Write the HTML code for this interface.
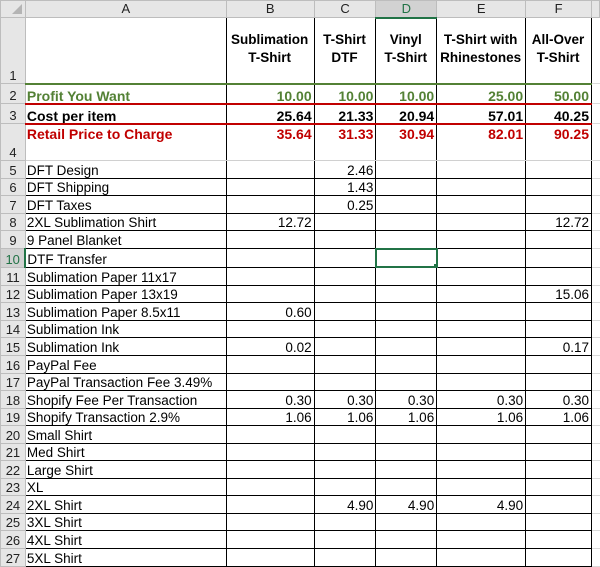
<!DOCTYPE html>
<html><head><meta charset="utf-8"><style>
html,body{margin:0;padding:0;background:#fff;width:600px;height:565px;overflow:hidden}
table{border-collapse:collapse;table-layout:fixed;position:absolute;left:0;top:0}
td{border:1px solid #000;padding:0 2px 0 1px;font:13.5px "Liberation Sans",Arial,sans-serif;white-space:nowrap;overflow:hidden;color:#000;line-height:14px;vertical-align:bottom}
td.h{background:#e6e6e6;border-color:#bdbdbd;text-align:center;color:#222;padding:0;font-size:13px}
tr.ch td{background:#e6e6e6;border-color:#bdbdbd;text-align:center;color:#222;vertical-align:middle;padding:0;font-size:13px}
td.n{text-align:right}
td.x{border-top-color:#d9d9d9;border-bottom-color:#d9d9d9;border-right:none}
tr.r td{height:16.55px}
.hd td.c{font-weight:bold;text-align:center;padding-bottom:16px;line-height:18px;font-size:13.5px}
.g td:not(.h):not(.x){color:#538135;font-weight:bold;border-top:2px solid #538135;font-size:14px}
.rd td:not(.h):not(.x){font-weight:bold;border-top:2px solid #c00000;font-size:14px}
.rr td:not(.h):not(.x){color:#c00000;font-weight:bold;border-top:2px solid #c00000;vertical-align:top;border-bottom-color:#d0d0d0;font-size:14px;padding-top:2px}
</style></head><body>
<table>
<colgroup><col style="width:25px"><col style="width:201px"><col style="width:88px"><col style="width:62px"><col style="width:61px"><col style="width:89px"><col style="width:66px"><col style="width:8px"></colgroup>
<tr class="ch" style="height:17px"><td></td><td>A</td><td>B</td><td>C</td><td style="background:#d2d2d2;color:#217346;border-bottom:2px solid #217346">D</td><td>E</td><td>F</td><td></td></tr>
<tr class="hd" style="height:66px"><td class="h" style="vertical-align:bottom">1</td><td></td><td class="c">Sublimation<br>T-Shirt</td><td class="c">T-Shirt<br>DTF</td><td class="c">Vinyl<br>T-Shirt</td><td class="c">T-Shirt with<br>Rhinestones</td><td class="c">All-Over<br>T-Shirt</td><td class="x"></td></tr>
<tr class="g" style="height:20px"><td class="h">2</td><td>Profit You Want</td><td class="n">10.00</td><td class="n">10.00</td><td class="n">10.00</td><td class="n">25.00</td><td class="n">50.00</td><td class="x"></td></tr>
<tr class="rd" style="height:20px"><td class="h">3</td><td>Cost per item</td><td class="n">25.64</td><td class="n">21.33</td><td class="n">20.94</td><td class="n">57.01</td><td class="n">40.25</td><td class="x"></td></tr>
<tr class="rr" style="height:37px"><td class="h">4</td><td>Retail Price to Charge</td><td class="n">35.64</td><td class="n">31.33</td><td class="n">30.94</td><td class="n">82.01</td><td class="n">90.25</td><td class="x"></td></tr>
<tr class="r"><td class="h">5</td><td>DFT Design</td><td></td><td class="n">2.46</td><td></td><td></td><td></td><td class="x"></td></tr>
<tr class="r"><td class="h">6</td><td>DFT Shipping</td><td></td><td class="n">1.43</td><td></td><td></td><td></td><td class="x"></td></tr>
<tr class="r"><td class="h">7</td><td>DFT Taxes</td><td></td><td class="n">0.25</td><td></td><td></td><td></td><td class="x"></td></tr>
<tr class="r"><td class="h">8</td><td>2XL Sublimation Shirt</td><td class="n">12.72</td><td></td><td></td><td></td><td class="n">12.72</td><td class="x"></td></tr>
<tr class="r"><td class="h">9</td><td>9 Panel Blanket</td><td></td><td></td><td></td><td></td><td></td><td class="x"></td></tr>
<tr class="r"><td class="h" style="color:#217346;background:#d2d2d2;border-right:2px solid #217346">10</td><td>DTF Transfer</td><td></td><td></td><td style="border:2px solid #217346;position:relative"><span style="position:absolute;right:-4px;bottom:-4px;width:5px;height:5px;background:#217346;border:1px solid #fff"></span></td><td></td><td></td><td class="x"></td></tr>
<tr class="r"><td class="h">11</td><td>Sublimation Paper 11x17</td><td></td><td></td><td></td><td></td><td></td><td class="x"></td></tr>
<tr class="r"><td class="h">12</td><td>Sublimation Paper 13x19</td><td></td><td></td><td></td><td></td><td class="n">15.06</td><td class="x"></td></tr>
<tr class="r"><td class="h">13</td><td>Sublimation Paper 8.5x11</td><td class="n">0.60</td><td></td><td></td><td></td><td></td><td class="x"></td></tr>
<tr class="r"><td class="h">14</td><td>Sublimation Ink</td><td></td><td></td><td></td><td></td><td></td><td class="x"></td></tr>
<tr class="r"><td class="h">15</td><td>Sublimation Ink</td><td class="n">0.02</td><td></td><td></td><td></td><td class="n">0.17</td><td class="x"></td></tr>
<tr class="r"><td class="h">16</td><td>PayPal Fee</td><td></td><td></td><td></td><td></td><td></td><td class="x"></td></tr>
<tr class="r"><td class="h">17</td><td>PayPal Transaction Fee 3.49%</td><td></td><td></td><td></td><td></td><td></td><td class="x"></td></tr>
<tr class="r"><td class="h">18</td><td>Shopify Fee Per Transaction</td><td class="n">0.30</td><td class="n">0.30</td><td class="n">0.30</td><td class="n">0.30</td><td class="n">0.30</td><td class="x"></td></tr>
<tr class="r"><td class="h">19</td><td>Shopify Transaction 2.9%</td><td class="n">1.06</td><td class="n">1.06</td><td class="n">1.06</td><td class="n">1.06</td><td class="n">1.06</td><td class="x"></td></tr>
<tr class="r"><td class="h">20</td><td>Small Shirt</td><td></td><td></td><td></td><td></td><td></td><td class="x"></td></tr>
<tr class="r"><td class="h">21</td><td>Med Shirt</td><td></td><td></td><td></td><td></td><td></td><td class="x"></td></tr>
<tr class="r"><td class="h">22</td><td>Large Shirt</td><td></td><td></td><td></td><td></td><td></td><td class="x"></td></tr>
<tr class="r"><td class="h">23</td><td>XL</td><td></td><td></td><td></td><td></td><td></td><td class="x"></td></tr>
<tr class="r"><td class="h">24</td><td>2XL Shirt</td><td></td><td class="n">4.90</td><td class="n">4.90</td><td class="n">4.90</td><td></td><td class="x"></td></tr>
<tr class="r"><td class="h">25</td><td>3XL Shirt</td><td></td><td></td><td></td><td></td><td></td><td class="x"></td></tr>
<tr class="r"><td class="h">26</td><td>4XL Shirt</td><td></td><td></td><td></td><td></td><td></td><td class="x"></td></tr>
<tr class="r"><td class="h">27</td><td>5XL Shirt</td><td></td><td></td><td></td><td></td><td></td><td class="x"></td></tr>
</table>
<div style="position:absolute;left:12px;top:4px;width:0;height:0;border-left:10px solid transparent;border-bottom:10px solid #b4b4b4"></div>
</body></html>
